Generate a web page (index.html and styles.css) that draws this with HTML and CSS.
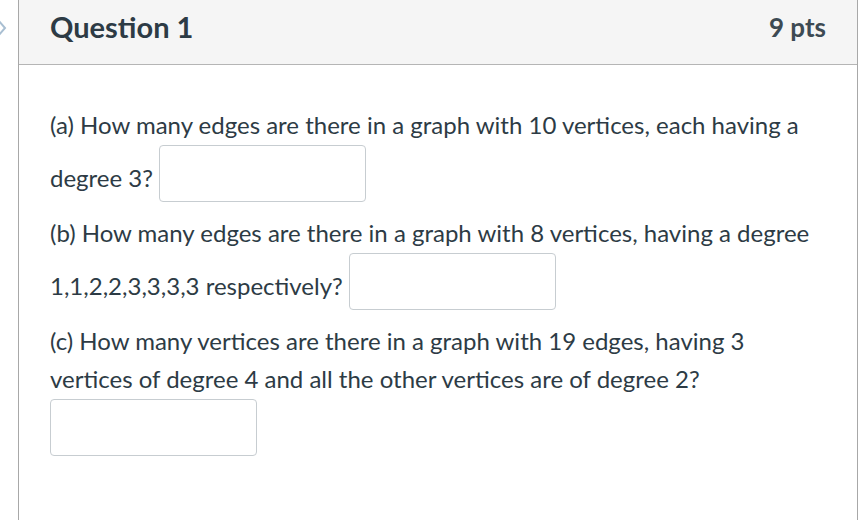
FILE: index.html
```html
<!DOCTYPE html>
<html lang="en">
<head>
<meta charset="utf-8">
<title>Question 1</title>
<link rel="stylesheet" href="styles.css">
</head>
<body>
<div class="page">
  <div class="gutter">
    <svg class="chev" width="10" height="18" viewBox="0 0 10 18"><polyline points="-2,1 5,9 -2,17" fill="none" stroke="#a9bfd2" stroke-width="2"/></svg>
  </div>
  <div class="question">
    <div class="q-header">
      <h2 class="q-title">Question 1</h2>
      <span class="q-pts">9 pts</span>
    </div>
    <div class="q-body">
      <p class="q-line">(a) How many edges are there in a graph with 10 vertices, each having a degree 3? <input class="ans" type="text"></p>
      <p class="q-line">(b) How many edges are there in a graph with 8 vertices, having a degree 1,1,2,2,3,3,3,3 respectively? <input class="ans" type="text"></p>
      <p class="q-line">(c) How many vertices are there in a graph with 19 edges, having 3 vertices of degree 4 and all the other vertices are of degree 2? <input class="ans" type="text"></p>
    </div>
  </div>
</div>
</body>
</html>
```
FILE: styles.css
```css
html, body {
  margin: 0;
  padding: 0;
  background: #ffffff;
}
body {
  font-family: Lato, "Noto Sans", sans-serif;
  color: #2d3b45;
  width: 865px;
  height: 520px;
  overflow: hidden;
}
.page {
  display: flex;
  align-items: stretch;
  height: 520px;
}
.gutter {
  width: 18px;
  flex: none;
  overflow: hidden;
  padding-top: 19px;
}
.chev {
  display: block;
}
.question {
  width: 840px;
  box-sizing: border-box;
  border-left: 1px solid #a8a8a8;
  border-right: 1px solid #a8a8a8;
}
.q-header {
  height: 65px;
  box-sizing: border-box;
  background: #f5f5f5;
  border-bottom: 1px solid #b5b5b5;
  display: flex;
  align-items: center;
  justify-content: space-between;
  padding: 0 31px 10px 31px;
}
.q-title {
  margin: 0;
  font-size: 29px;
  font-weight: 700;
  line-height: 34px;
}
.q-pts {
  font-size: 26px;
  font-weight: 700;
  line-height: 34px;
  color: #3d4a53;
}
.q-body {
  padding: 41px 30px 0 31px;
  font-size: 24px;
  line-height: 38px;
}
.q-line {
  margin: 0 0 17px 0;
}
.ans {
  width: 207px;
  height: 57px;
  box-sizing: border-box;
  border: 1px solid #c7cdd1;
  border-radius: 4px;
  vertical-align: text-bottom;
  margin: 1px 0 -10px 0;
  padding: 0 8px;
  font: inherit;
  background: #fff;
}
```
